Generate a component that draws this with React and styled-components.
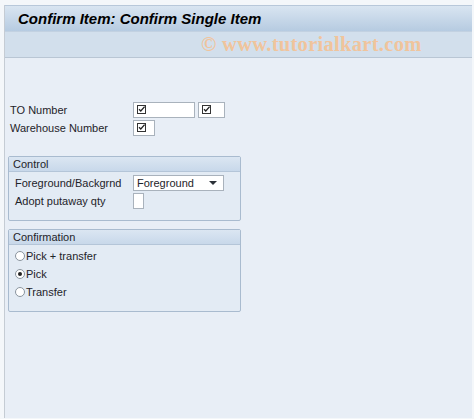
import styled, { createGlobalStyle } from "styled-components";

const Global = createGlobalStyle`
  html, body { margin: 0; padding: 0; background: #f4f7fa; }
  body { font-family: "Liberation Sans", Arial, sans-serif; }
`;

const Check = () => (
  <svg width="9" height="9" viewBox="0 0 9 9">
    <rect x="0.5" y="0.5" width="8" height="8" fill="none" stroke="#333" strokeWidth="1" />
    <path d="M2 4.2 L3.8 6 L7.6 1.6" fill="none" stroke="#222" strokeWidth="1.3" />
  </svg>
);

const App = () => {
  return (
    <Page>
      <Global />
      <Frame>
        <TitleBar>Confirm Item: Confirm Single Item</TitleBar>
        <Toolbar>
          <Watermark>© www.tutorialkart.com</Watermark>
        </Toolbar>
        <Content>
          <Fields>
            <Row>
              <Label>TO Number</Label>
              <Input width="62px">
                <Check />
              </Input>
              <Input width="27px">
                <Check />
              </Input>
            </Row>
            <Row>
              <Label>Warehouse Number</Label>
              <Input width="22px">
                <Check />
              </Input>
            </Row>
          </Fields>

          <Group top="20px">
            <GroupHead>Control</GroupHead>
            <GroupBody>
              <Row>
                <Label inner>Foreground/Backgrnd</Label>
                <Select>
                  Foreground
                  <Arrow />
                </Select>
              </Row>
              <Row>
                <Label inner>Adopt putaway qty</Label>
                <CheckBox />
              </Row>
            </GroupBody>
          </Group>

          <Group top="8px">
            <GroupHead>Confirmation</GroupHead>
            <GroupBody>
              <RadioRow>
                <Radio />
                Pick + transfer
              </RadioRow>
              <RadioRow>
                <Radio on />
                Pick
              </RadioRow>
              <RadioRow>
                <Radio />
                Transfer
              </RadioRow>
            </GroupBody>
          </Group>
        </Content>
      </Frame>
    </Page>
  );
};

const Page = styled.div`
  width: 474px;
  height: 419px;
  padding: 5px 2px 1px 4px;
  box-sizing: border-box;
  display: flex;
`;

const Frame = styled.div`
  flex: 1;
  display: flex;
  flex-direction: column;
  border-left: 1px solid #c5ccd4;
  background: #e8eef6;
`;

const TitleBar = styled.div`
  height: 26px;
  box-sizing: border-box;
  padding: 4px 0 0 13px;
  border-top: 1px solid #b8c8da;
  background: linear-gradient(#d9e5f1, #b6cbe1);
  font-family: "Liberation Sans", Arial, sans-serif;
  font-size: 15px;
  font-weight: bold;
  font-style: italic;
  color: #000;
`;

const Toolbar = styled.div`
  height: 27px;
  box-sizing: border-box;
  border-top: 1px solid #c2d1e1;
  border-bottom: 1px solid #b9c6d4;
  background: #d2dfec;
  padding: 1px 0 0 196px;
`;

const Watermark = styled.div`
  font-family: "Liberation Serif", serif;
  font-weight: bold;
  font-size: 20.5px;
  color: #f0c49c;
  letter-spacing: 0.3px;
`;

const Content = styled.div`
  flex: 1;
  padding: 44px 0 0 3px;
  display: flex;
  flex-direction: column;
`;

const Fields = styled.div`
  display: flex;
  flex-direction: column;
  gap: 2px;
  padding-left: 2px;
`;

const Row = styled.div`
  display: flex;
  align-items: center;
  height: 16px;
  gap: 3px;
`;

const Label = styled.div`
  width: ${(p) => (p.inner ? "115px" : "120px")};
  font-size: 11px;
  color: #1e2329;
  white-space: nowrap;
`;

const Input = styled.div`
  width: ${(p) => p.width};
  height: 16px;
  box-sizing: border-box;
  border: 1px solid #a9b2bc;
  background: #fff;
  padding: 2px 0 0 3px;
  display: flex;
  align-items: flex-start;
`;

const Group = styled.div`
  margin-top: ${(p) => p.top};
  width: 233px;
  box-sizing: border-box;
  border: 1px solid #a9bbcf;
  border-radius: 2px;
  background: #e3ebf4;
`;

const GroupHead = styled.div`
  height: 14px;
  padding-left: 4px;
  font-size: 11px;
  line-height: 14px;
  color: #1e2329;
  background: linear-gradient(#dbe6f2, #c8d8ea);
  border-bottom: 1px solid #b4c5d8;
`;

const GroupBody = styled.div`
  padding: 3px 6px 11px;
  display: flex;
  flex-direction: column;
  gap: 2px;
`;

const Select = styled.div`
  position: relative;
  width: 91px;
  height: 16px;
  box-sizing: border-box;
  border: 1px solid #a9b2bc;
  background: #fff;
  font-size: 11px;
  line-height: 14px;
  padding-left: 3px;
  color: #1e2329;
`;

const Arrow = styled.span`
  position: absolute;
  right: 6px;
  top: 5px;
  width: 0;
  height: 0;
  border-left: 4px solid transparent;
  border-right: 4px solid transparent;
  border-top: 4px solid #2b3138;
`;

const CheckBox = styled.div`
  width: 11px;
  height: 16px;
  box-sizing: border-box;
  border: 1px solid #a9b2bc;
  background: #fff;
`;

const RadioRow = styled.div`
  display: flex;
  align-items: center;
  gap: 1px;
  height: 16px;
  font-size: 11px;
  color: #1e2329;
`;

const Radio = styled.span`
  width: 10px;
  height: 10px;
  box-sizing: border-box;
  border: 1px solid #8a949e;
  border-radius: 50%;
  background: #fff;
  display: flex;
  align-items: center;
  justify-content: center;
  &::after {
    content: "";
    width: 4px;
    height: 4px;
    border-radius: 50%;
    background: ${(p) => (p.on ? "#222" : "transparent")};
  }
`;

export default App;
